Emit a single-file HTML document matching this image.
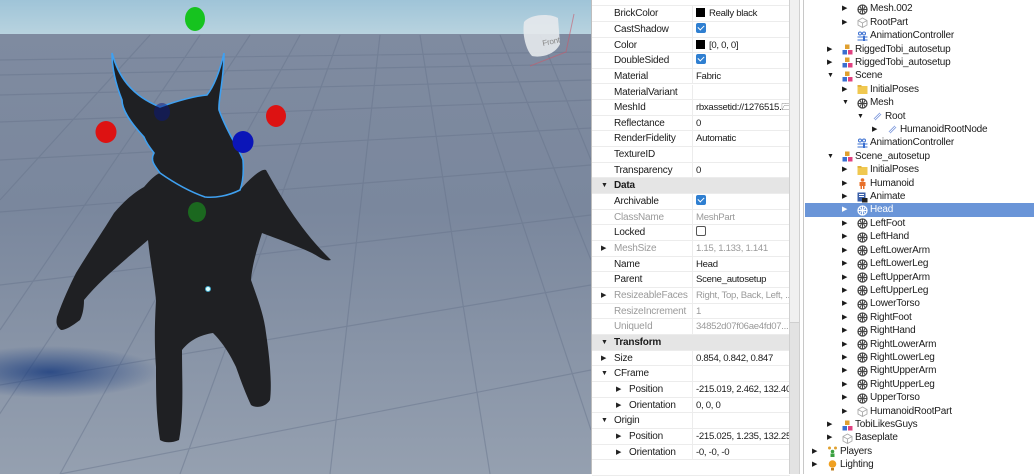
<!DOCTYPE html>
<html><head><meta charset="utf-8"><style>
*{margin:0;padding:0;box-sizing:border-box}
body{width:1034px;height:474px;overflow:hidden;background:#fff;font-family:"Liberation Sans",sans-serif;font-size:10px;letter-spacing:-0.2px;color:#1b1b1b;position:relative}
#vp{position:absolute;left:0;top:0;width:591px;height:474px}
#props{position:absolute;left:591px;top:0;width:198px;height:474px;background:#fff;border-left:1px solid #bdbdbd}
.r{position:absolute;left:0;width:198px;height:15.66px;border-bottom:1px solid #ececec;line-height:15px;white-space:nowrap}
.r .n{position:absolute;left:22px}
.r .v{position:absolute;left:100px;width:98px;overflow:hidden;border-left:1px solid #ececec;padding-left:3px;height:15px;font-size:9.6px;letter-spacing:-0.3px}
.r.g{color:#9a9a9a}
.r.h{background:#e5e5e5;font-weight:bold}
.ar{position:absolute;font-size:7px;color:#222}
.cb{display:inline-block;width:10px;height:10px;background:#2f7fd1;border-radius:2px;vertical-align:-1px;position:relative}
.cb:after{content:"";position:absolute;left:3px;top:1px;width:3px;height:5px;border:solid #fff;border-width:0 1.5px 1.5px 0;transform:rotate(45deg)}
.ub{display:inline-block;width:10px;height:10px;border:1px solid #555;border-radius:2px;vertical-align:-1px}
.sw{display:inline-block;width:9px;height:9px;background:#000;vertical-align:-1px;margin-right:4px}
#sb{position:absolute;left:789px;top:0;width:11px;height:474px;background:#f0f0f0;border-left:1px solid #d0d0d0;border-right:1px solid #d0d0d0}
#sbt{position:absolute;left:790px;top:322px;width:9px;height:152px;background:#e3e3e3;border-top:1px solid #cfcfcf}
#exp{position:absolute;left:803px;top:0;width:231px;height:474px;background:#fff;border-left:1px solid #c8c8c8}
.e{position:absolute;left:1px;width:230px;height:13.41px;line-height:13.41px;white-space:nowrap}
.e.sel{background:#6a95d8;color:#fff}
.e .a{position:absolute;font-size:7px;top:0}
.e .i{position:absolute;top:1.5px;width:11px;height:11px}
.e .t{position:absolute}
</style></head><body>
<svg id="vp" width="591" height="474" viewBox="0 0 591 474">
<defs>
<linearGradient id="sky" x1="0" y1="0" x2="0" y2="1"><stop offset="0" stop-color="#9fc4d8"/><stop offset="1" stop-color="#b8d3df"/></linearGradient>
<linearGradient id="fl" x1="0" y1="0" x2="0" y2="1"><stop offset="0" stop-color="#7f8ba0"/><stop offset="0.4" stop-color="#7a879d"/><stop offset="1" stop-color="#95a0b0"/></linearGradient>
<radialGradient id="sh" cx="0.5" cy="0.5" r="0.5"><stop offset="0" stop-color="#1d3f80" stop-opacity="0.85"/><stop offset="1" stop-color="#1d3f80" stop-opacity="0"/></radialGradient>
</defs>
<rect width="591" height="34" fill="url(#sky)"/>
<rect y="34" width="591" height="440" fill="url(#fl)"/>
<g stroke="#65728a" stroke-width="1.2" opacity="0.45" fill="none">
<path d="M0 60 L591 52 M0 75 L591 64 M0 95 L591 80 M0 122 L591 100 M0 160 L591 128 M0 212 L591 165 M0 285 L591 215 M0 385 L591 285 M60 474 L591 370"/>
<path d="M-40 474 L250 35 M60 474 L300 35 M180 474 L340 35 M330 474 L380 35 M490 474 L420 35 M591 430 L460 35 M591 260 L500 35 M591 160 L540 35 M0 330 L200 35 M0 200 L150 35"/>
</g>
<ellipse cx="50" cy="372" rx="110" ry="26" fill="url(#sh)"/>
<path d="M112 53 C118 75 130 95 160 107 C180 100 195 96 207 95 C215 85 220 70 224 53 C224 80 218 100 219 110 C228 135 240 150 243 160 C244 175 242 185 240 190 C250 178 262 168 266 170 C280 195 300 230 331 260 C325 262 318 256 312 253 C295 245 275 238 262 233 C255 255 252 268 251 280 C258 300 264 315 266 333 C270 360 272 385 270 400 C265 408 255 408 251 405 C244 390 240 378 236 367 C228 350 220 340 213 333 C200 335 190 340 182 350 C182 380 184 415 179 440 C172 443 165 443 160 440 C156 415 156 390 156 367 C154 340 155 320 156 300 C154 280 150 260 148 240 C125 260 100 280 84 300 C84 310 82 316 80 320 C72 326 66 330 61 330 C56 326 56 322 57 317 C63 300 70 285 76 273 C90 250 105 228 114 213 C125 200 135 192 144 187 C150 180 155 175 160 173 C154 165 150 160 154 153 C148 145 146 142 144 137 C130 122 122 110 122 100 C116 85 112 70 112 53 Z" fill="#1f2023"/>
<path d="M112 53 C118 75 130 95 160 107 C180 100 195 96 207 95 C215 85 220 70 224 53 C224 80 218 100 219 110 C228 135 240 150 243 160 C244 175 242 185 240 190 C228 196 215 198 205 197 C185 190 170 180 160 173 C154 165 150 160 154 153 C148 145 146 142 144 137 C130 122 122 110 122 100 C116 85 112 70 112 53 Z" fill="none" stroke="#3fa0f0" stroke-width="1.6"/>
<ellipse cx="195" cy="19" rx="10" ry="12" fill="#16c31f"/>
<ellipse cx="106" cy="132" rx="10.5" ry="11" fill="#dd1212"/>
<ellipse cx="276" cy="116" rx="10" ry="11" fill="#dd1212"/>
<ellipse cx="243" cy="142" rx="10.5" ry="11" fill="#0b15b8"/>
<ellipse cx="162" cy="112" rx="8" ry="9" fill="#0a1880" opacity="0.5"/>
<ellipse cx="197" cy="212" rx="9" ry="10" fill="#1a7a1e" opacity="0.8"/>
<circle cx="208" cy="289" r="2.5" fill="#dff" stroke="#4ac" stroke-width="1"/>
<path d="M524 22 C530 14 550 13 558 18 L560 44 C555 55 540 58 532 56 C526 50 522 35 524 22 Z" fill="#e6e9ec" opacity="0.9"/>
<text x="543" y="46" font-size="8" fill="#888" font-family="Liberation Sans" transform="rotate(-12 543 46)">Front</text>
<path d="M574 14 L566 52 L530 66" stroke="#c85a6a" stroke-width="1" fill="none" opacity="0.6"/>
</svg>

<div id="props">
<div class="r" style="top:-9.46px"></div>
<div class="r" style="top:6.2px"><span class="n">BrickColor</span><span class="v"><span class="sw"></span>Really black</span></div>
<div class="r" style="top:21.86px"><span class="n">CastShadow</span><span class="v"><span class="cb"></span></span></div>
<div class="r" style="top:37.52px"><span class="n">Color</span><span class="v"><span class="sw"></span>[0, 0, 0]</span></div>
<div class="r" style="top:53.18px"><span class="n">DoubleSided</span><span class="v"><span class="cb"></span></span></div>
<div class="r" style="top:68.84px"><span class="n">Material</span><span class="v">Fabric</span></div>
<div class="r" style="top:84.5px"><span class="n">MaterialVariant</span><span class="v"></span></div>
<div class="r" style="top:100.16px"><span class="n">MeshId</span><span class="v">rbxassetid://1276515.🗁</span></div>
<div class="r" style="top:115.82px"><span class="n">Reflectance</span><span class="v">0</span></div>
<div class="r" style="top:131.48px"><span class="n">RenderFidelity</span><span class="v">Automatic</span></div>
<div class="r" style="top:147.14px"><span class="n">TextureID</span><span class="v"></span></div>
<div class="r" style="top:162.8px"><span class="n">Transparency</span><span class="v">0</span></div>
<div class="r h" style="top:178.46px"><span class="ar" style="left:9px">▼</span><span class="n">Data</span></div>
<div class="r" style="top:194.12px"><span class="n">Archivable</span><span class="v"><span class="cb"></span></span></div>
<div class="r g" style="top:209.78px"><span class="n">ClassName</span><span class="v">MeshPart</span></div>
<div class="r" style="top:225.44px"><span class="n">Locked</span><span class="v"><span class="ub"></span></span></div>
<div class="r g" style="top:241.1px"><span class="ar" style="left:9px">▶</span><span class="n">MeshSize</span><span class="v">1.15, 1.133, 1.141</span></div>
<div class="r" style="top:256.76px"><span class="n">Name</span><span class="v">Head</span></div>
<div class="r" style="top:272.42px"><span class="n">Parent</span><span class="v">Scene_autosetup</span></div>
<div class="r g" style="top:288.08px"><span class="ar" style="left:9px">▶</span><span class="n">ResizeableFaces</span><span class="v">Right, Top, Back, Left, ...</span></div>
<div class="r g" style="top:303.74px"><span class="n">ResizeIncrement</span><span class="v">1</span></div>
<div class="r g" style="top:319.4px"><span class="n">UniqueId</span><span class="v">34852d07f06ae4fd07...</span></div>
<div class="r h" style="top:335.06px"><span class="ar" style="left:9px">▼</span><span class="n">Transform</span></div>
<div class="r" style="top:350.72px"><span class="ar" style="left:9px">▶</span><span class="n">Size</span><span class="v">0.854, 0.842, 0.847</span></div>
<div class="r" style="top:366.38px"><span class="ar" style="left:9px">▼</span><span class="n">CFrame</span><span class="v"></span></div>
<div class="r" style="top:382.04px"><span class="ar" style="left:24px">▶</span><span class="n" style="left:37px">Position</span><span class="v">-215.019, 2.462, 132.405</span></div>
<div class="r" style="top:397.7px"><span class="ar" style="left:24px">▶</span><span class="n" style="left:37px">Orientation</span><span class="v">0, 0, 0</span></div>
<div class="r" style="top:413.36px"><span class="ar" style="left:9px">▼</span><span class="n">Origin</span><span class="v"></span></div>
<div class="r" style="top:429.02px"><span class="ar" style="left:24px">▶</span><span class="n" style="left:37px">Position</span><span class="v">-215.025, 1.235, 132.25</span></div>
<div class="r" style="top:444.68px"><span class="ar" style="left:24px">▶</span><span class="n" style="left:37px">Orientation</span><span class="v">-0, -0, -0</span></div>
<div class="r" style="top:460.34px"></div>
</div>
<div id="sb"></div><div id="sbt"></div>

<svg width="0" height="0" style="position:absolute"><defs>
<symbol id="mesh" viewBox="0 0 11 11"><circle cx="5.5" cy="5.5" r="4.5" fill="none" stroke="#444" stroke-width="1.3"/><path d="M1 5.5H10M5.5 1V10M3 2.5Q5.5 5.5 3 8.5M8 2.5Q5.5 5.5 8 8.5" stroke="#444" fill="none" stroke-width="1"/></symbol>
<symbol id="meshw" viewBox="0 0 11 11"><circle cx="5.5" cy="5.5" r="4.5" fill="none" stroke="#fff" stroke-width="1.3"/><path d="M1 5.5H10M5.5 1V10M3 2.5Q5.5 5.5 3 8.5M8 2.5Q5.5 5.5 8 8.5" stroke="#fff" fill="none" stroke-width="1"/></symbol>
<symbol id="model" viewBox="0 0 11 11"><rect x="3" y="0.5" width="4.5" height="4.5" fill="#e0a030"/><rect x="0.5" y="6" width="4.5" height="4.5" fill="#3a6fd0"/><rect x="6" y="6" width="4.5" height="4.5" fill="#e04080"/></symbol>
<symbol id="part" viewBox="0 0 11 11"><path d="M5.5 1L10 3.5V8L5.5 10.5L1 8V3.5Z M1 3.5L5.5 6L10 3.5M5.5 6V10.5" fill="none" stroke="#aaa" stroke-width="0.9"/></symbol>
<symbol id="folder" viewBox="0 0 11 11"><rect x="0.5" y="2" width="10" height="8" fill="#f0c850"/><rect x="0.5" y="1" width="4" height="2" fill="#e0b440"/></symbol>
<symbol id="anim" viewBox="0 0 11 11"><circle cx="3" cy="2.5" r="1.5" fill="none" stroke="#3a6fd0"/><circle cx="7" cy="2.5" r="1.5" fill="none" stroke="#3a6fd0"/><path d="M0.5 6H10.5M0.5 9H10.5" stroke="#3a6fd0"/><rect x="6" y="5" width="2" height="5" fill="#3a6fd0"/></symbol>
<symbol id="bone" viewBox="0 0 11 11"><path d="M2.5 8.5L8.5 2.5" stroke="#6a8ad8" stroke-width="2.5"/><path d="M2.5 8.5L8.5 2.5" stroke="#fff" stroke-width="1"/></symbol>
<symbol id="hum" viewBox="0 0 11 11"><circle cx="5.5" cy="2" r="1.8" fill="#e8702a"/><rect x="2.5" y="4" width="6" height="4" fill="#e8702a"/><rect x="3.5" y="8" width="1.5" height="3" fill="#e8702a"/><rect x="6" y="8" width="1.5" height="3" fill="#e8702a"/></symbol>
<symbol id="script" viewBox="0 0 11 11"><rect x="0.5" y="0.5" width="8" height="9" fill="#3a5fa8"/><rect x="2" y="2" width="5" height="1" fill="#fff"/><rect x="2" y="4" width="5" height="1" fill="#fff"/><rect x="5" y="6" width="5.5" height="4.5" fill="#222"/></symbol>
<symbol id="players" viewBox="0 0 11 11"><circle cx="2.5" cy="2" r="1.5" fill="#e0a030"/><circle cx="8.5" cy="2" r="1.5" fill="#e0a030"/><circle cx="5.5" cy="5.5" r="1.8" fill="#3aa040"/><rect x="3.5" y="7.5" width="4" height="3.5" fill="#3aa040"/></symbol>
<symbol id="light" viewBox="0 0 11 11"><circle cx="5.5" cy="4" r="3.8" fill="#f0a020"/><rect x="4" y="8" width="3" height="2.5" fill="#c08020"/></symbol>
</defs></svg>

<div id="exp">
<div class="e" style="top:2.3px"><span class="a" style="left:37px">▶</span><svg class="i" style="left:52px"><use href="#mesh"/></svg><span class="t" style="left:65px">Mesh.002</span></div>
<div class="e" style="top:15.71px"><span class="a" style="left:37px">▶</span><svg class="i" style="left:52px"><use href="#part"/></svg><span class="t" style="left:65px">RootPart</span></div>
<div class="e" style="top:29.12px"><svg class="i" style="left:52px"><use href="#anim"/></svg><span class="t" style="left:65px">AnimationController</span></div>
<div class="e" style="top:42.53px"><span class="a" style="left:22px">▶</span><svg class="i" style="left:37px"><use href="#model"/></svg><span class="t" style="left:50px">RiggedTobi_autosetup</span></div>
<div class="e" style="top:55.94px"><span class="a" style="left:22px">▶</span><svg class="i" style="left:37px"><use href="#model"/></svg><span class="t" style="left:50px">RiggedTobi_autosetup</span></div>
<div class="e" style="top:69.35px"><span class="a" style="left:22px">▼</span><svg class="i" style="left:37px"><use href="#model"/></svg><span class="t" style="left:50px">Scene</span></div>
<div class="e" style="top:82.76px"><span class="a" style="left:37px">▶</span><svg class="i" style="left:52px"><use href="#folder"/></svg><span class="t" style="left:65px">InitialPoses</span></div>
<div class="e" style="top:96.17px"><span class="a" style="left:37px">▼</span><svg class="i" style="left:52px"><use href="#mesh"/></svg><span class="t" style="left:65px">Mesh</span></div>
<div class="e" style="top:109.58px"><span class="a" style="left:52px">▼</span><svg class="i" style="left:67px"><use href="#bone"/></svg><span class="t" style="left:80px">Root</span></div>
<div class="e" style="top:122.99px"><span class="a" style="left:67px">▶</span><svg class="i" style="left:82px"><use href="#bone"/></svg><span class="t" style="left:95px">HumanoidRootNode</span></div>
<div class="e" style="top:136.4px"><svg class="i" style="left:52px"><use href="#anim"/></svg><span class="t" style="left:65px">AnimationController</span></div>
<div class="e" style="top:149.81px"><span class="a" style="left:22px">▼</span><svg class="i" style="left:37px"><use href="#model"/></svg><span class="t" style="left:50px">Scene_autosetup</span></div>
<div class="e" style="top:163.22px"><span class="a" style="left:37px">▶</span><svg class="i" style="left:52px"><use href="#folder"/></svg><span class="t" style="left:65px">InitialPoses</span></div>
<div class="e" style="top:176.63px"><span class="a" style="left:37px">▶</span><svg class="i" style="left:52px"><use href="#hum"/></svg><span class="t" style="left:65px">Humanoid</span></div>
<div class="e" style="top:190.04px"><span class="a" style="left:37px">▶</span><svg class="i" style="left:52px"><use href="#script"/></svg><span class="t" style="left:65px">Animate</span></div>
<div class="e sel" style="top:203.45px"><span class="a" style="left:37px">▶</span><svg class="i" style="left:52px"><use href="#meshw"/></svg><span class="t" style="left:65px">Head</span></div>
<div class="e" style="top:216.86px"><span class="a" style="left:37px">▶</span><svg class="i" style="left:52px"><use href="#mesh"/></svg><span class="t" style="left:65px">LeftFoot</span></div>
<div class="e" style="top:230.27px"><span class="a" style="left:37px">▶</span><svg class="i" style="left:52px"><use href="#mesh"/></svg><span class="t" style="left:65px">LeftHand</span></div>
<div class="e" style="top:243.68px"><span class="a" style="left:37px">▶</span><svg class="i" style="left:52px"><use href="#mesh"/></svg><span class="t" style="left:65px">LeftLowerArm</span></div>
<div class="e" style="top:257.09px"><span class="a" style="left:37px">▶</span><svg class="i" style="left:52px"><use href="#mesh"/></svg><span class="t" style="left:65px">LeftLowerLeg</span></div>
<div class="e" style="top:270.5px"><span class="a" style="left:37px">▶</span><svg class="i" style="left:52px"><use href="#mesh"/></svg><span class="t" style="left:65px">LeftUpperArm</span></div>
<div class="e" style="top:283.91px"><span class="a" style="left:37px">▶</span><svg class="i" style="left:52px"><use href="#mesh"/></svg><span class="t" style="left:65px">LeftUpperLeg</span></div>
<div class="e" style="top:297.32px"><span class="a" style="left:37px">▶</span><svg class="i" style="left:52px"><use href="#mesh"/></svg><span class="t" style="left:65px">LowerTorso</span></div>
<div class="e" style="top:310.73px"><span class="a" style="left:37px">▶</span><svg class="i" style="left:52px"><use href="#mesh"/></svg><span class="t" style="left:65px">RightFoot</span></div>
<div class="e" style="top:324.14px"><span class="a" style="left:37px">▶</span><svg class="i" style="left:52px"><use href="#mesh"/></svg><span class="t" style="left:65px">RightHand</span></div>
<div class="e" style="top:337.55px"><span class="a" style="left:37px">▶</span><svg class="i" style="left:52px"><use href="#mesh"/></svg><span class="t" style="left:65px">RightLowerArm</span></div>
<div class="e" style="top:350.96px"><span class="a" style="left:37px">▶</span><svg class="i" style="left:52px"><use href="#mesh"/></svg><span class="t" style="left:65px">RightLowerLeg</span></div>
<div class="e" style="top:364.37px"><span class="a" style="left:37px">▶</span><svg class="i" style="left:52px"><use href="#mesh"/></svg><span class="t" style="left:65px">RightUpperArm</span></div>
<div class="e" style="top:377.78px"><span class="a" style="left:37px">▶</span><svg class="i" style="left:52px"><use href="#mesh"/></svg><span class="t" style="left:65px">RightUpperLeg</span></div>
<div class="e" style="top:391.19px"><span class="a" style="left:37px">▶</span><svg class="i" style="left:52px"><use href="#mesh"/></svg><span class="t" style="left:65px">UpperTorso</span></div>
<div class="e" style="top:404.6px"><span class="a" style="left:37px">▶</span><svg class="i" style="left:52px"><use href="#part"/></svg><span class="t" style="left:65px">HumanoidRootPart</span></div>
<div class="e" style="top:418.01px"><span class="a" style="left:22px">▶</span><svg class="i" style="left:37px"><use href="#model"/></svg><span class="t" style="left:50px">TobiLikesGuys</span></div>
<div class="e" style="top:431.42px"><span class="a" style="left:22px">▶</span><svg class="i" style="left:37px"><use href="#part"/></svg><span class="t" style="left:50px">Baseplate</span></div>
<div class="e" style="top:444.83px"><span class="a" style="left:7px">▶</span><svg class="i" style="left:22px"><use href="#players"/></svg><span class="t" style="left:35px">Players</span></div>
<div class="e" style="top:458.24px"><span class="a" style="left:7px">▶</span><svg class="i" style="left:22px"><use href="#light"/></svg><span class="t" style="left:35px">Lighting</span></div>
</div>
</body></html>
